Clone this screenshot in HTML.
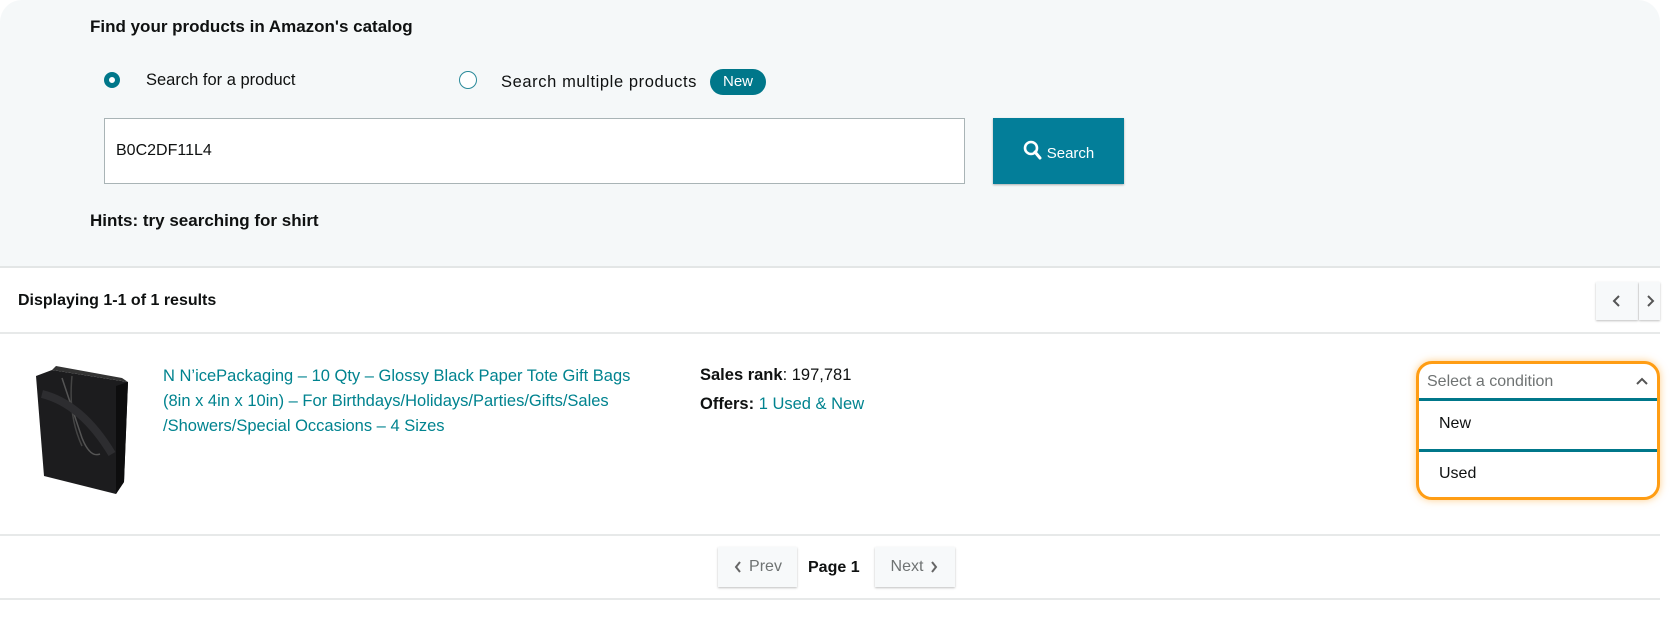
<!DOCTYPE html>
<html><head><meta charset="utf-8"><style>
*{box-sizing:border-box;margin:0;padding:0}
body{width:1680px;height:635px;background:#fff;font-family:"Liberation Sans",sans-serif;color:#0f1111;position:relative;overflow:hidden}
.abs{position:absolute}
.panel{left:0;top:0;width:1660px;height:268px;background:#f5f8f9;border-top-right-radius:22px;border-top-left-radius:22px;border-bottom:2px solid #e3e6e6}
.b{font-weight:bold}
.link{color:#00838f}
.hr{height:2px;background:#e7e9e9;left:0;width:1660px}
.btn{background:#f7f9fa;box-shadow:0 1px 2px rgba(0,0,0,.25);color:#6f7373;font-size:16px;display:flex;align-items:center;justify-content:center;gap:6px}
</style></head><body>
<div class="abs panel"></div>
<div class="abs b" style="left:90px;top:17px;font-size:17px">Find your products in Amazon's catalog</div>
<div class="abs" style="left:104px;top:72px;width:16px;height:16px;border-radius:50%;border:5px solid #00778a;background:#fff"></div>
<div class="abs" style="left:146px;top:71px;font-size:16.5px">Search for a product</div>
<div class="abs" style="left:459px;top:71px;width:18px;height:18px;border-radius:50%;border:1.5px solid #2a8a9a;background:#fff"></div>
<div class="abs" style="left:501px;top:73px;font-size:16.5px;letter-spacing:0.6px">Search multiple products</div>
<div class="abs" style="left:710px;top:69px;width:56px;height:26px;border-radius:13px;background:#00778a;color:#fff;font-size:15px;text-align:center;line-height:26px">New</div>
<div class="abs" style="left:104px;top:118px;width:861px;height:66px;background:#fff;border:1.5px solid #a9b4b6"></div>
<div class="abs" style="left:116px;top:142px;font-size:16px">B0C2DF11L4</div>
<div class="abs" style="left:993px;top:118px;width:131px;height:66px;background:#037e99;box-shadow:0 1px 2px rgba(0,0,0,.3);color:#fff;font-size:15px;display:flex;align-items:center;justify-content:center;gap:4px">
<svg width="20" height="22" viewBox="0 0 20 22"><circle cx="8" cy="8" r="6" fill="none" stroke="#fff" stroke-width="2.6"/><path d="M12 12l5 6" stroke="#fff" stroke-width="3" stroke-linecap="round"/></svg><span style="margin-top:4px">Search</span></div>
<div class="abs b" style="left:90px;top:211px;font-size:17px">Hints: try searching for shirt</div>
<div class="abs b" style="left:18px;top:292px;font-size:16px">Displaying 1-1 of 1 results</div>
<div class="abs btn" style="left:1596px;top:282px;width:42px;height:38px">
<svg width="12" height="14" viewBox="0 0 12 14"><path d="M8 2L3 7l5 5" fill="none" stroke="#555" stroke-width="2"/></svg></div>
<div class="abs btn" style="left:1639px;top:282px;width:21px;height:38px;justify-content:flex-start;padding-left:6px">
<svg width="12" height="14" viewBox="0 0 12 14"><path d="M3 2l5 5-5 5" fill="none" stroke="#555" stroke-width="2"/></svg></div>
<div class="abs hr" style="top:332px"></div>
<svg class="abs" style="left:32px;top:364px" width="96" height="132" viewBox="0 0 96 132">
<path d="M4 12L20 6 96 18 92 118 84 130 12 112z" fill="#1c1c1e"/>
<path d="M84 22L96 18 92 118 84 130z" fill="#0d0d0e"/>
<path d="M20 6L24 2 90 14 96 18z" fill="#333"/>
<path d="M30 14q10 30 20 60 8 20 18 16" stroke="#555" stroke-width="1.5" fill="none"/>
<path d="M40 12q-4 40 10 70" stroke="#444" stroke-width="1.5" fill="none"/>
<path d="M10 30q40 10 70 60" stroke="#2d2d30" stroke-width="8" fill="none"/>
</svg>
<div class="abs link" style="left:163px;top:364px;font-size:16.5px;line-height:25px;white-space:nowrap">N N’icePackaging – 10 Qty – Glossy Black Paper Tote Gift Bags<br>(8in x 4in x 10in) – For Birthdays/Holidays/Parties/Gifts/Sales<br>/Showers/Special Occasions – 4 Sizes</div>
<div class="abs" style="left:700px;top:366px;font-size:16.5px"><span class="b">Sales rank</span>: 197,781</div>
<div class="abs" style="left:700px;top:395px;font-size:16.5px"><span class="b">Offers:</span> <span class="link">1 Used &amp; New</span></div>
<div class="abs" style="left:1416px;top:361px;width:244px;height:139px;border:3px solid #ff9d14;border-radius:16px;box-shadow:0 0 8px rgba(255,157,20,.5);background:#fff;overflow:hidden">
<div style="height:34px;position:relative;font-size:16px;color:#6f7373;padding:9px 0 0 8px">Select a condition
<svg style="position:absolute;right:8px;top:12px" width="14" height="10" viewBox="0 0 14 10"><path d="M2 8l5-5 5 5" fill="none" stroke="#555" stroke-width="2"/></svg></div>
<div style="height:3px;background:#00778a"></div>
<div style="height:48px;font-size:16px;padding:14px 0 0 20px">New</div>
<div style="height:3px;background:#00778a"></div>
<div style="font-size:16px;padding:13px 0 0 20px">Used</div>
</div>
<div class="abs hr" style="top:534px"></div>
<div class="abs btn" style="left:718px;top:547px;width:79px;height:40px"><svg width="10" height="14" viewBox="0 0 10 14"><path d="M7 2L3 7l4 5" fill="none" stroke="#666" stroke-width="2"/></svg>Prev</div>
<div class="abs b" style="left:808px;top:559px;font-size:16px">Page 1</div>
<div class="abs btn" style="left:875px;top:547px;width:80px;height:40px">Next<svg width="10" height="14" viewBox="0 0 10 14"><path d="M3 2l4 5-4 5" fill="none" stroke="#666" stroke-width="2"/></svg></div>
<div class="abs hr" style="top:598px"></div>
</body></html>
